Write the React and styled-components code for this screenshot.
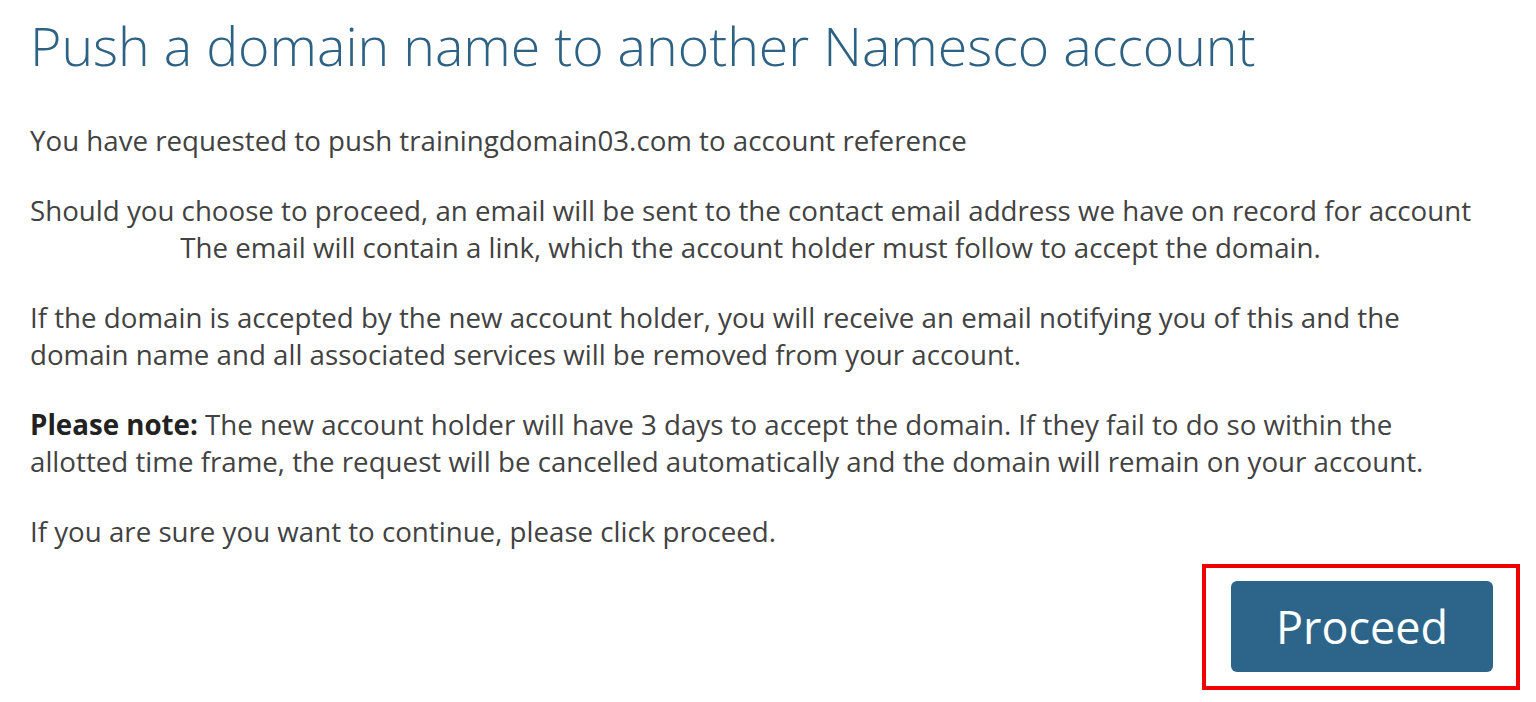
import React from "react";
import styled, { createGlobalStyle } from "styled-components";

const Global = createGlobalStyle`
  html, body { margin: 0; padding: 0; background: #ffffff; }
  body { font-family: "Open Sans", "Liberation Sans", sans-serif; }
`;

const Page = styled.main`
  display: flex;
  flex-direction: column;
  padding: 12px 16px 0 30px;
`;

const Title = styled.h1`
  margin: 0 0 43px 0;
  font-size: 53.7px;
  line-height: 67px;
  font-weight: 300;
  color: #2e6284;
  white-space: nowrap;
`;

const Para = styled.p`
  margin: 0 0 ${(p) => (p.$gap ? p.$gap : 33)}px 0;
  font-size: 27.7px;
  line-height: 37px;
  color: #424242;
  text-align: ${(p) => (p.$center ? "center" : "left")};
  width: ${(p) => (p.$center ? "fit-content" : "auto")};
  max-width: ${(p) => (p.$center ? "none" : "1445px")};
  white-space: ${(p) => (p.$center ? "nowrap" : "normal")};
`;

const Strong = styled.strong`
  font-weight: 700;
  color: #222222;
`;

const ActionRow = styled.div`
  display: flex;
  justify-content: flex-end;
`;

const Highlight = styled.div`
  border: 4px solid #f00000;
  padding: 13px 23px 14px 25px;
`;

const Button = styled.button`
  width: 262px;
  height: 91px;
  border: none;
  border-radius: 6px;
  background: #2c6589;
  color: #ffffff;
  font-family: "Open Sans", "Liberation Sans", sans-serif;
  font-size: 45px;
  font-weight: 400;
  cursor: pointer;
`;

export default function App() {
  return (
    <>
      <Global />
      <Page>
        <Title>Push a domain name to another Namesco account</Title>
        <Para>
          You have requested to push trainingdomain03.com to account reference
        </Para>
        <Para $center>
          Should you choose to proceed, an email will be sent to the contact email address we have on record for account
          <br />
          The email will contain a link, which the account holder must follow to accept the domain.
        </Para>
        <Para>
          If the domain is accepted by the new account holder, you will receive an email notifying you of this and the
          domain name and all associated services will be removed from your account.
        </Para>
        <Para>
          <Strong>Please note:</Strong> The new account holder will have 3 days to accept the domain. If they fail to do so within the
          allotted time frame, the request will be cancelled automatically and the domain will remain on your account.
        </Para>
        <Para $gap={14}>If you are sure you want to continue, please click proceed.</Para>
        <ActionRow>
          <Highlight>
            <Button>Proceed</Button>
          </Highlight>
        </ActionRow>
      </Page>
    </>
  );
}
